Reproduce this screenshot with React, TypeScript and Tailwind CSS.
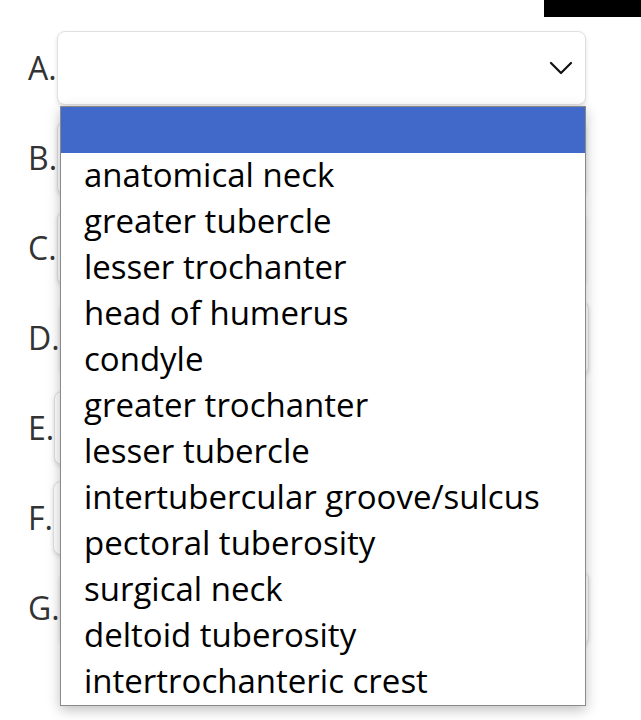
import React from "react";

const labels = ["A.", "B.", "C.", "D.", "E.", "F.", "G."];

const options = [
  "anatomical neck",
  "greater tubercle",
  "lesser trochanter",
  "head of humerus",
  "condyle",
  "greater trochanter",
  "lesser tubercle",
  "intertubercular groove/sulcus",
  "pectoral tuberosity",
  "surgical neck",
  "deltoid tuberosity",
  "intertrochanteric crest",
];

const Chevron: React.FC = () => (
  <svg width="24" height="14" viewBox="0 0 24 14" fill="none">
    <path d="M2 2l10 10L22 2" stroke="#111" strokeWidth="2.2" strokeLinecap="round" strokeLinejoin="round" />
  </svg>
);

const App: React.FC = () => {
  return (
    <div className="relative w-[641px] h-[720px] overflow-hidden bg-white font-['Open_Sans',sans-serif]">
      {/* black block top right */}
      <div className="flex justify-end">
        <div className="w-[97px] h-[17px] bg-black" />
      </div>

      <div className="flex flex-col gap-4 pl-7 pt-[14px]">
        {labels.map((l) => (
          <div key={l} className="flex items-center">
            <span className="text-[32px] text-[#333] leading-none">{l}</span>
            <div className="w-[529px] h-[74px] rounded-lg border border-[#e0e0e0] bg-white shadow-[0_2px_4px_rgba(0,0,0,0.12)] flex items-center justify-end pr-[12px]">
              {l === "A." && <Chevron />}
            </div>
          </div>
        ))}
      </div>

      {/* open native dropdown */}
      <div className="absolute left-[60px] top-[106px] w-[526px] border border-[#8a8a8a] bg-white shadow-[0_4px_12px_rgba(0,0,0,0.25)]">
        <div className="h-[46px] bg-[#4169c9]" />
        {options.map((o) => (
          <div key={o} className="h-[46px] pl-[23px] pb-[3px] flex items-center text-[33px] text-black leading-none whitespace-nowrap">
            {o}
          </div>
        ))}
      </div>
    </div>
  );
};

export default App;
